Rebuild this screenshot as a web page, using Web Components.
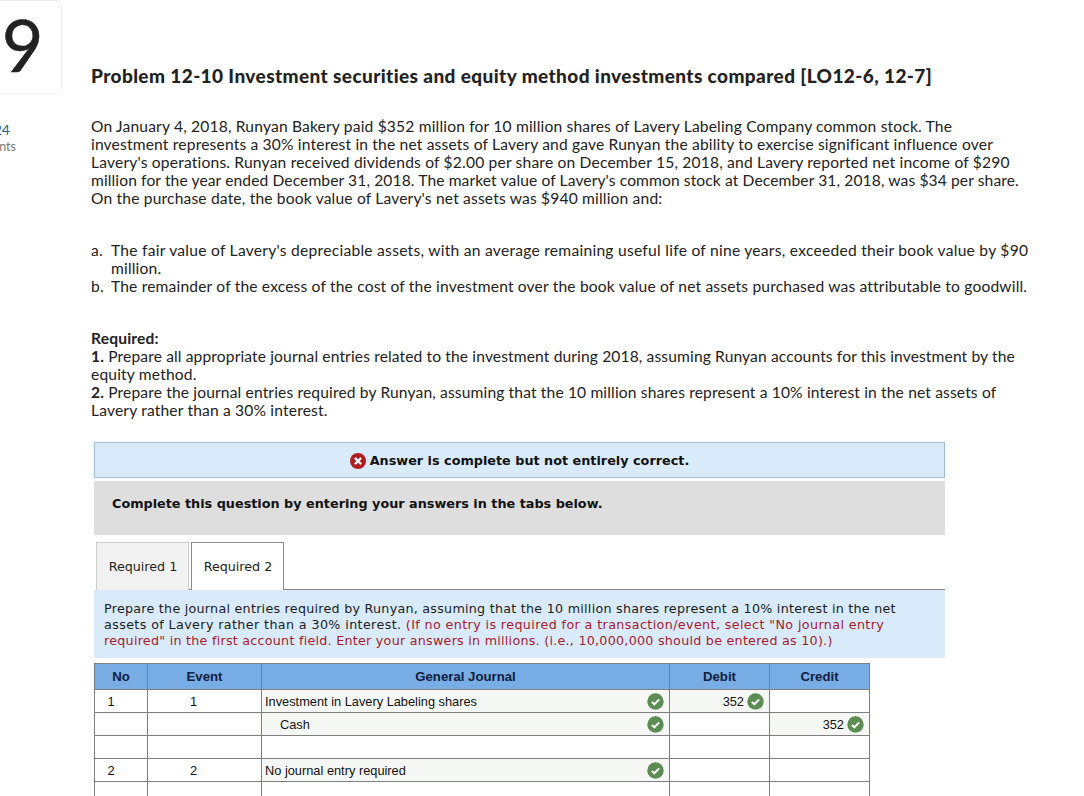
<!DOCTYPE html>
<html><head><meta charset="utf-8">
<style>
html,body{margin:0;padding:0;background:#fff;overflow:hidden;height:796px;width:1084px}
</style></head><body>
<qz-page>
  <qz-side slot="side" number="9" score="24" unit="ents"></qz-side>
  <qz-problem slot="main" heading="Problem 12-10 Investment securities and equity method investments compared [LO12-6, 12-7]">
    <p style="margin:0 0 34px">On January 4, 2018, Runyan Bakery paid $352 million for 10 million shares of Lavery Labeling Company common stock. The<br>investment represents a 30% interest in the net assets of Lavery and gave Runyan the ability to exercise significant influence over<br><span style="letter-spacing:.185px">Lavery's operations. Runyan received dividends of $2.00 per share on December 15, 2018, and Lavery reported net income of $290</span><br><span style="letter-spacing:.11px">million for the year ended December 31, 2018. The market value of Lavery's common stock at December 31, 2018, was $34 per share.</span><br>On the purchase date, the book value of Lavery's net assets was $940 million and:</p>
    <qz-item label="a."><span style="letter-spacing:.26px">The fair value of Lavery's depreciable assets, with an average remaining useful life of nine years, exceeded their book value by $90</span><br>million.</qz-item>
    <qz-item label="b." style="margin-bottom:34px">The remainder of the excess of the cost of the investment over the book value of net assets purchased was attributable to goodwill.</qz-item>
    <p style="margin:0 0 23px"><b>Required:</b><br><b>1.</b> <span style="letter-spacing:.125px">Prepare all appropriate journal entries related to the investment during 2018, assuming Runyan accounts for this investment by the</span><br>equity method.<br><b>2.</b> <span style="letter-spacing:.14px">Prepare the journal entries required by Runyan, assuming that the 10 million shares represent a 10% interest in the net assets of</span><br>Lavery rather than a 30% interest.</p>
  </qz-problem>
  <qz-answer slot="answer"></qz-answer>
</qz-page>
<script>
const def=(name,html,init)=>customElements.define(name,class extends HTMLElement{
  constructor(){super();this.attachShadow({mode:'open'}).innerHTML=html;}
  connectedCallback(){init&&init(this);}
});
const text=(h,sel,attr)=>{h.shadowRoot.querySelector(sel).textContent=h.getAttribute(attr)};
const CHECK='<svg width="17" height="17" viewBox="0 0 17 17" style="display:block"><circle cx="8.5" cy="8.5" r="8.2" fill="#5b8c51"/><path d="M4.8 8.9l2.5 2.4 4.9-4.9" fill="none" stroke="#fff" stroke-width="2"/></svg>';
def('qz-page',`<style>
:host{display:grid;grid-template-columns:91px 950px;font-family:Lato,"Liberation Sans",sans-serif;color:#222}
.a{grid-column:2}
</style><slot name="side"></slot><div class="m"><slot name="main"></slot></div><div class="a"><slot name="answer"></slot></div>`);
def('qz-side',`<style>
:host{display:block;font-family:Lato,"Liberation Sans",sans-serif}
.card{box-sizing:border-box;width:102px;height:94px;margin-left:-40px;border:1px solid #eee;border-radius:6px;display:flex;justify-content:flex-end;align-items:flex-start;padding-right:17.5px;font-size:72px;line-height:90px;color:#222;-webkit-text-stroke:.5px #222}
.card span{display:block;margin-top:-2px}
.s{display:flex;justify-content:flex-end;white-space:nowrap}
.n{width:10px;margin-top:27px;font-size:14px;line-height:17px;color:#2a5a85}
.u{width:16px;font-size:12.5px;line-height:17px;color:#777}
</style><div class="card"><span id="num"></span></div><div class="s n"><span id="sc"></span></div><div class="s u"><span id="un"></span></div>`,
h=>{text(h,'#num','number');text(h,'#sc','score');text(h,'#un','unit')});
def('qz-problem',`<style>
:host{display:block;font-family:Lato,"Liberation Sans",sans-serif;font-size:15.6px;letter-spacing:.17px;font-variant-ligatures:none;line-height:18px;color:#222;white-space:nowrap}
h1{margin:0 0 31px;padding-top:66px;font-size:19px;letter-spacing:.4px;line-height:20px;font-weight:900;color:#222}
</style><h1 id="t"></h1><slot></slot>`,h=>text(h,'#t','heading'));
def('qz-item',`<style>
:host{display:grid;grid-template-columns:20px auto}
</style><span id="l"></span><div><slot></slot></div>`,h=>text(h,'#l','label'));
def('qz-alert',`<style>
:host{display:flex;box-sizing:border-box;width:851px;height:36px;margin-left:3px;padding-top:1px;background:#d9ebfa;border:1px solid #9dbcd6;align-items:center;justify-content:center;gap:4px;font:700 12.8px "DejaVu Sans",sans-serif;color:#111}
svg{display:block}
</style><svg width="16" height="16" viewBox="0 0 16 16"><circle cx="8" cy="8" r="8" fill="#b01c20"/><path d="M4.9 4.9l6.2 6.2M11.1 4.9l-6.2 6.2" stroke="#fff" stroke-width="2.2"/></svg><slot></slot>`);
def('qz-instruction',`<style>
:host{display:block;box-sizing:border-box;width:851px;height:54px;margin:3px 0 7px 3px;background:#dedede;padding:14px 18px;font:700 12.8px/17px "DejaVu Sans",sans-serif;color:#111}
</style><slot></slot>`);
def('qz-tabs',`<style>
:host{display:flex;box-sizing:border-box;width:849px;height:48px;margin-left:5px;gap:2px;border-bottom:1px solid #8a8a8a}
</style><slot></slot>`);
def('qz-tab',`<style>
:host{display:flex;box-sizing:border-box;width:93px;height:48px;align-items:center;justify-content:center;font:12.7px "DejaVu Sans",sans-serif;color:#222;background:#f2f2f2;border:1px solid #ccc;border-bottom:0;padding:0 0 1px 1px}
:host([active]){background:#fff;border-color:#8a8a8a}
</style><slot></slot>`);
def('qz-note',`<style>
:host{display:block;box-sizing:border-box;width:851px;height:68px;margin:0 0 5px 3px;background:#d9ebfa;padding:11px 10px 0;font:12.7px/16px "DejaVu Sans",sans-serif;color:#1a1a1a;letter-spacing:.26px;white-space:nowrap}
</style><slot></slot>`);
const rows=[['1','1','Investment in Lavery Labeling shares',0,1,'352','',1],['','','Cash',1,1,'','352',2],['','','',0,0,'','',0],['2','2','No journal entry required',0,1,'','',3],['','','',0,0,'','',0]];
const cell=(v,filled)=>`<td class="num${filled?' f':''}">${v?`<span class="v">${v}${CHECK}</span>`:''}</td>`;
def('qz-journal',`<style>
:host{display:block;margin-left:3px;font:12px "Liberation Sans",sans-serif;color:#111;height:133px;overflow:hidden}
table{border-collapse:collapse;table-layout:fixed;width:776px}
th,td{border:1px solid #7f7f7f;padding:0;box-sizing:border-box}
th{height:26px;background:#78ace4;font-size:13.2px;font-weight:700;color:#102040;text-align:center}
td{height:23px;font-size:12.8px;background:#fff;text-align:center;padding-top:1px}
td.no{padding-right:20px}
td.ev{padding-right:22px}
td.acct{text-align:left;padding-left:3px;background:#f6f8f6;position:relative}
td.blank{background:#fff}
td.ind{padding-left:18px}
td.num{text-align:right;padding-right:5px}
td.f{background:#f6f8f6}
.v{display:inline-flex;align-items:center;gap:3px;vertical-align:middle}
.c{position:absolute;right:5px;top:3px}
</style><table><colgroup><col style="width:53px"><col style="width:114px"><col style="width:408px"><col style="width:100px"><col style="width:100px"></colgroup>
<thead><tr><th>No</th><th>Event</th><th>General Journal</th><th>Debit</th><th>Credit</th></tr></thead>
<tbody>${rows.map(r=>`<tr><td class="no">${r[0]}</td><td class="ev">${r[1]}</td><td class="${r[4]?'acct':'blank'}${r[3]?' ind':''}">${r[2]}${r[4]?`<span class="c">${CHECK}</span>`:''}</td>${cell(r[5],r[7]==1)}${cell(r[6],r[7]==2)}</tr>`).join('')}</tbody></table>`);
def('qz-answer',`<style>:host{display:block}em{font-style:normal;color:#a8182c}</style>
<qz-alert>Answer is complete but not entirely correct.</qz-alert>
<qz-instruction>Complete this question by entering your answers in the tabs below.</qz-instruction>
<qz-tabs><qz-tab>Required 1</qz-tab><qz-tab active>Required 2</qz-tab></qz-tabs>
<qz-note>Prepare the journal entries required by Runyan, assuming that the 10 million shares represent a 10% interest in the net<br><span style="letter-spacing:.39px">assets of Lavery rather than a 30% interest. <em>(If no entry is required for a transaction/event, select "No journal entry</em></span><br><em>required" in the first account field. Enter your answers in millions. (i.e., 10,000,000 should be entered as 10).)</em></qz-note>
<qz-journal></qz-journal>`);
</script>
</body></html>
